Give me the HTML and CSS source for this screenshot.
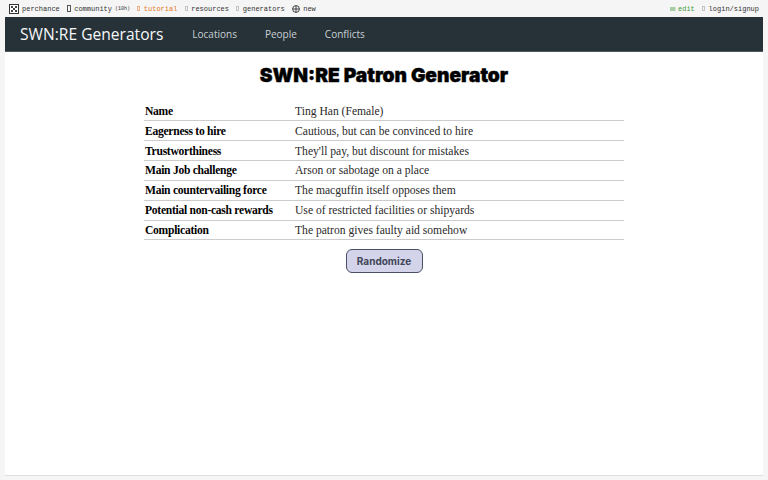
FILE: index.html
```html
<!DOCTYPE html>
<html lang="en">
<head>
<meta charset="utf-8">
<title>SWN:RE Patron Generator</title>
<link rel="stylesheet" href="styles.css">
</head>
<body>
<div class="topbar">
  <div class="toplinks">
    <a class="toplink first"><svg class="dice" width="10" height="10" viewBox="0 0 10 10"><rect x=".5" y=".5" width="9" height="9" fill="#fff" stroke="#333"/><rect x="2" y="2" width="2" height="2" fill="#444"/><rect x="6" y="2" width="2" height="2" fill="#444"/><rect x="4" y="4" width="2" height="2" fill="#444"/><rect x="2" y="6" width="2" height="2" fill="#444"/><rect x="6" y="6" width="2" height="2" fill="#444"/></svg>perchance</a>
    <a class="toplink"><span class="tofu big"></span>community <small class="tiny">(10h)</small></a>
    <a class="toplink orange"><span class="tofu orangebox"></span>tutorial</a>
    <a class="toplink"><span class="tofu"></span>resources</a>
    <a class="toplink"><span class="tofu"></span>generators</a>
    <a class="toplink"><svg class="globe" width="8" height="8" viewBox="0 0 8 8"><circle cx="4" cy="4" r="3.4" fill="none" stroke="#333" stroke-width=".9"/><path d="M0.6 4h6.8M4 .6v6.8" stroke="#333" stroke-width=".9"/></svg>new</a>
  </div>
  <div class="toplinks">
    <a class="toplink green"><svg class="pencil" width="6" height="4" viewBox="0 0 6 4"><path d="M0 1h5.5M0 3h5.5" stroke="#5aa85a" stroke-width="1"/></svg>edit</a>
    <a class="toplink"><span class="tofu"></span>login/signup</a>
  </div>
</div>
<main class="sheet">
  <nav class="navbar">
    <span class="brand">SWN:RE Generators</span>
    <a class="navlink">Locations</a>
    <a class="navlink">People</a>
    <a class="navlink">Conflicts</a>
  </nav>
  <h1 class="title">SWN:RE Patron Generator</h1>
  <table class="patron">
    <tr><th>Name</th><td>Ting Han (Female)</td></tr>
    <tr><th>Eagerness to hire</th><td>Cautious, but can be convinced to hire</td></tr>
    <tr><th>Trustworthiness</th><td>They'll pay, but discount for mistakes</td></tr>
    <tr><th>Main Job challenge</th><td>Arson or sabotage on a place</td></tr>
    <tr><th>Main countervailing force</th><td>The macguffin itself opposes them</td></tr>
    <tr><th>Potential non-cash rewards</th><td>Use of restricted facilities or shipyards</td></tr>
    <tr><th>Complication</th><td>The patron gives faulty aid somehow</td></tr>
  </table>
  <div class="actions"><button class="randomize" type="button">Randomize</button></div>
</main>
</body>
</html>
```
FILE: styles.css
```css
* { box-sizing: border-box; }
html, body { height: 100%; }
body {
  margin: 0;
  background: #f5f5f5;
  display: flex;
  flex-direction: column;
  height: 480px;
  overflow: hidden;
}
.topbar {
  height: 17px;
  flex: none;
  display: flex;
  justify-content: space-between;
  align-items: center;
  padding: 0 9px;
  font-family: "Liberation Mono", monospace;
  font-size: 7px;
  color: #333;
}
.toplinks { display: flex; align-items: center; gap: 7.4px; }
.toplink { display: flex; align-items: center; white-space: nowrap; }
.orange { color: #e8761e; }
.green { color: #3a9a3a; }
.dice { margin-right: 3px; }
.globe { margin-right: 3px; }
.tiny { font-size: 5px; margin-left: 3px; }
.tofu {
  display: inline-block;
  width: 3px;
  height: 5px;
  margin-right: 3.4px;
  border: 1px solid #c4c4c4;
}
.tofu.big { width: 4px; height: 7px; margin-right: 3px; border-color: #555; }
.orangebox { border-color: #eab08a; }
.pencil { margin-right: 2px; }
.sheet {
  flex: none;
  height: 459px;
  margin: 0 5px;
  background: #fff;
  border-bottom: 1px solid #ddd;
}
.navbar {
  height: 35px;
  display: flex;
  align-items: center;
  padding-left: 15px;
  background: #263238;
  border-bottom: 1px solid #4a5a64;
  font-family: "Open Sans", sans-serif;
  color: #e4e8ea;
}
.brand { font-size: 15.6px; margin-right: 29px; color: #f5f7f8; }
.navlink { font-size: 10px; margin-right: 28px; color: #c9d0d4; }
.title {
  margin: 12px 0 0;
  text-align: center;
  font-family: "Inter", sans-serif;
  font-weight: 900;
  font-size: 19.2px;
  line-height: 23px;
  color: #000;
  -webkit-text-stroke: 0.4px #000;
}
.patron {
  width: 480px;
  margin: 14px auto 0;
  border-collapse: collapse;
  table-layout: fixed;
  font-family: "Liberation Serif", serif;
  font-size: 11.6px;
  color: #2a2a2a;
}
.patron th, .patron td {
  height: 19.85px;
  padding: 1px 0 0;
  border-bottom: 1px solid #ccc;
  text-align: left;
  line-height: 15px;
}
.patron th { width: 151px; padding-left: 1px; font-weight: 700; color: #000; letter-spacing: -0.28px; }
.actions { display: flex; justify-content: center; margin-top: 9px; }
.randomize {
  width: 77px;
  height: 24px;
  padding: 0;
  background: #d3d4ea;
  border: 1px solid #4a4f66;
  border-radius: 6px;
  font-family: "Inter", sans-serif;
  font-weight: 700;
  font-size: 10px;
  color: #3f4458;
}
```
